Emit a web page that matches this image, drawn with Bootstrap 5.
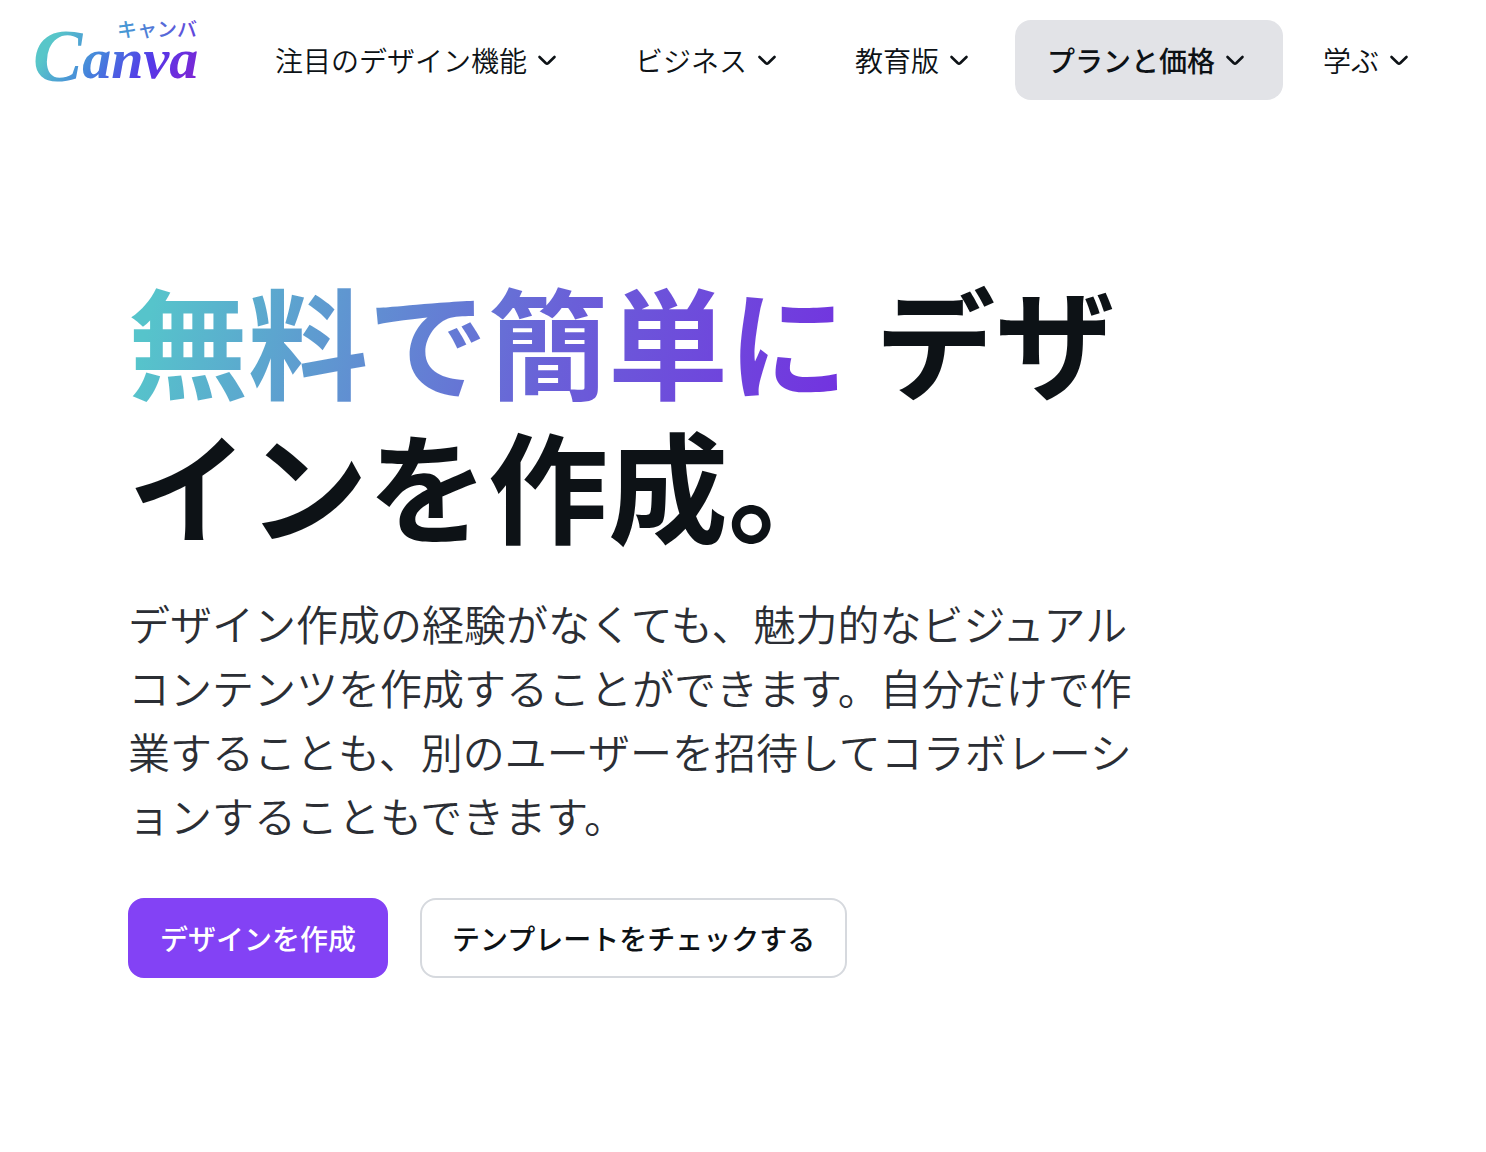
<!DOCTYPE html>
<html lang="ja">
<head>
<meta charset="utf-8">
<meta name="viewport" content="width=device-width, initial-scale=1">
<title>Canva キャンバ</title>
<link rel="stylesheet" href="https://cdn.jsdelivr.net/npm/bootstrap@5.3.0/dist/css/bootstrap.min.css">
<style>
  body { font-family: "Noto Sans CJK JP", sans-serif; color: #0d1216; background: #fff; }
  .site-bar { padding: 8px 32px; }
  .brand-link { width: 172px; margin-right: 39px; }
  .menu-list { gap: 8px; }
  .menu-btn {
    --bs-btn-color: #0d1216; --bs-btn-hover-bg: #f1f2f4; --bs-btn-hover-color: #0d1216;
    height: 80px; padding: 0 32px; gap: 4px; border: 0; border-radius: 16px;
    font-size: 28px; font-weight: 350; white-space: nowrap;
  }
  .menu-btn.active { background: #e2e3e7; color: #0d1216; font-weight: 500; }
  .hero { padding: 147px 128px 0; }
  .hero-inner { max-width: 1008px; }
  .hero-title { font-size: 120px; line-height: 144px; font-weight: 700; margin-bottom: 36px; }
  .hero-accent {
    background: linear-gradient(105deg, #56c4cb 5%, #6a5fd8 60%, #7330e0 100%);
    -webkit-background-clip: text; background-clip: text; color: transparent;
  }
  .hero-copy { font-size: 42px; line-height: 64px; font-weight: 350; color: #2b2e34; margin-bottom: 51px; line-break: loose; }
  .cta-row { gap: 32px; }
  .cta { height: 80px; padding: 0 30px; border-width: 2px; border-radius: 16px; font-size: 28px; font-weight: 500; }
  .cta-main { --bs-btn-bg: #8342f5; --bs-btn-border-color: #8342f5; --bs-btn-color: #fff; --bs-btn-hover-bg: #7230e6; --bs-btn-hover-color: #fff; }
  .cta-line { --bs-btn-border-color: #d6d9de; --bs-btn-color: #0d1216; --bs-btn-hover-border-color: #b8bdc5; }
</style>
<script src="https://cdn.jsdelivr.net/npm/bootstrap@5.3.0/dist/js/bootstrap.bundle.min.js"></script>
</head>
<body>
<svg class="d-none" aria-hidden="true">
  <symbol id="chev" viewBox="0 0 32 32"><path d="M8.500 13l6.200 6q1.300 1.100 2.600 0l6.200-6" fill="none" stroke="currentColor" stroke-width="2.600" stroke-linecap="round" stroke-linejoin="round"/></symbol>
</svg>
<header>
  <nav class="navbar navbar-expand site-bar flex-nowrap justify-content-start" aria-label="メイン">
    <a class="brand-link flex-shrink-0" href="#" aria-label="Canva キャンバ">
      <svg class="d-block" width="172" height="104" viewBox="0 0 172 104">
        <defs>
          <linearGradient id="ink" gradientUnits="userSpaceOnUse" x1="30" y1="18" x2="145" y2="90">
            <stop offset="0" stop-color="#58c6c9"/><stop offset=".35" stop-color="#4583dc"/>
            <stop offset=".7" stop-color="#5438e8"/><stop offset="1" stop-color="#7a28d6"/>
          </linearGradient>
          <linearGradient id="kana" gradientUnits="userSpaceOnUse" x1="86" y1="0" x2="164" y2="0">
            <stop offset="0" stop-color="#459fd3"/><stop offset="1" stop-color="#6145dc"/>
          </linearGradient>
        </defs>
        <text x="1" y="73" font-family="Liberation Serif, serif" font-style="italic" font-weight="700" font-size="74" fill="url(#ink)">C<tspan font-size="58" y="70">anva</tspan></text>
        <text x="85" y="29" font-family="Noto Sans CJK JP, sans-serif" font-weight="500" font-size="20" fill="url(#kana)">キャンバ</text>
      </svg>
    </a>
    <ul class="navbar-nav menu-list">
      <li class="nav-item"><button type="button" class="btn menu-btn d-flex align-items-center">注目のデザイン機能<svg width="32" height="32" aria-hidden="true"><use href="#chev"/></svg></button></li>
      <li class="nav-item"><button type="button" class="btn menu-btn d-flex align-items-center">ビジネス<svg width="32" height="32" aria-hidden="true"><use href="#chev"/></svg></button></li>
      <li class="nav-item"><button type="button" class="btn menu-btn d-flex align-items-center">教育版<svg width="32" height="32" aria-hidden="true"><use href="#chev"/></svg></button></li>
      <li class="nav-item"><button type="button" class="btn menu-btn active d-flex align-items-center">プランと価格<svg width="32" height="32" aria-hidden="true"><use href="#chev"/></svg></button></li>
      <li class="nav-item"><button type="button" class="btn menu-btn d-flex align-items-center">学ぶ<svg width="32" height="32" aria-hidden="true"><use href="#chev"/></svg></button></li>
    </ul>
  </nav>
</header>
<main class="hero">
  <div class="hero-inner">
    <h1 class="hero-title"><span class="hero-accent">無料で簡単に</span> デザインを作成。</h1>
    <p class="hero-copy">デザイン作成の経験がなくても、魅力的なビジュアルコンテンツを作成することができます。自分だけで作業することも、別のユーザーを招待してコラボレーションすることもできます。</p>
    <div class="d-flex flex-wrap cta-row">
      <button type="button" class="btn cta cta-main">デザインを作成</button>
      <button type="button" class="btn cta cta-line">テンプレートをチェックする</button>
    </div>
  </div>
</main>
</body>
</html>
